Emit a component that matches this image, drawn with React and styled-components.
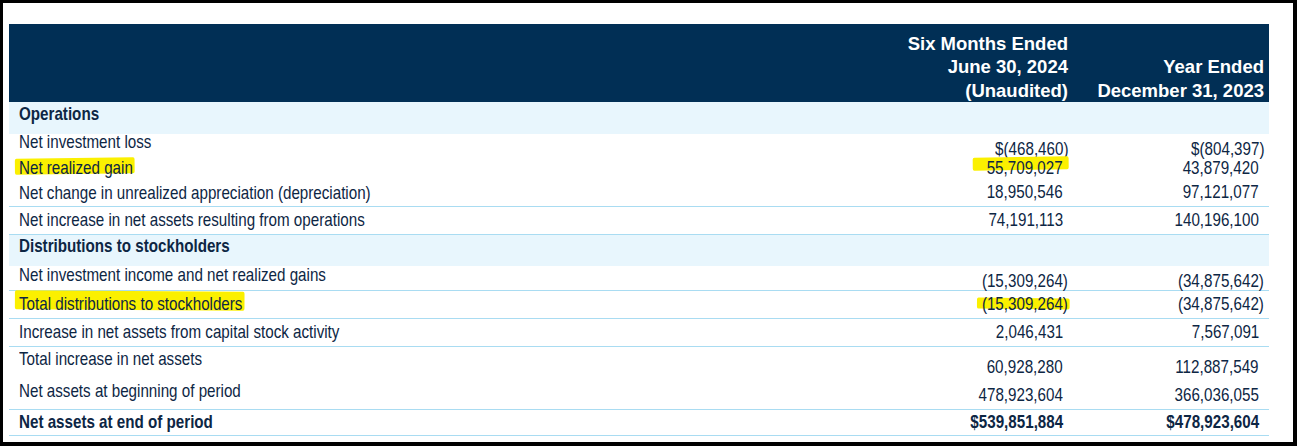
import React from 'react';
import styled, { createGlobalStyle } from 'styled-components';

const Global = createGlobalStyle`
  html, body { margin: 0; padding: 0; background: #000; }
  body { font-family: "Liberation Sans", Arial, sans-serif; }
`;

const Frame = styled.div`
  box-sizing: border-box;
  width: 1297px;
  height: 446px;
  padding: 3px 4px 4px 3px;
  background: #000;
`;

const Panel = styled.div`
  box-sizing: border-box;
  height: 100%;
  background: #fff;
  padding: 21px 0 0 6px;
`;

const Table = styled.div`
  width: 1260px;
  display: flex;
  flex-direction: column;
`;

const HeaderRow = styled.div`
  display: grid;
  grid-template-columns: 1fr 200px 196px;
  height: 78px;
  background: #012f55;
  color: #fff;
  font: bold 18.5px/23.5px "Liberation Sans", Arial, sans-serif;
`;

const HeadCell = styled.div`
  display: flex;
  flex-direction: column;
  justify-content: flex-end;
  align-items: flex-end;
  padding-right: 5px;
  white-space: nowrap;
`;

const Row = styled.div`
  display: grid;
  grid-template-columns: 1fr 200px 196px;
  box-sizing: border-box;
  height: ${(p) => p.$h}px;
  background: ${(p) => (p.$section ? '#e8f6fd' : 'transparent')};
  border-bottom: ${(p) => (p.$line ? '1px solid #a9dcf2' : '0')};
  font-family: "Liberation Sans", Arial, sans-serif;
  font-size: 18.5px;
  line-height: 16px;
  color: #0d2644;
  font-weight: ${(p) => (p.$bold ? 700 : 400)};
`;

const Label = styled.div`
  padding: ${(p) => p.$top}px 0 0 10px;
  white-space: nowrap;
`;

const Num = styled.div`
  text-align: right;
  padding: ${(p) => p.$top}px ${(p) => (p.$hang ? 10 : 5)}px 0 0;
  white-space: nowrap;
`;

/* Narrow (condensed) rendering of the body text, as in the source document */
const Narrow = styled.span`
  display: inline-block;
  transform: scaleX(0.82);
  transform-origin: ${(p) => (p.$right ? 'right' : 'left')} center;
`;

const Mark = styled.span`
  position: relative;
  z-index: 0;
  &::before {
    content: '';
    position: absolute;
    left: ${(p) => p.$l}px;
    right: ${(p) => p.$r}px;
    top: ${(p) => p.$t}px;
    bottom: ${(p) => p.$b}px;
    background: #fbf000;
    border-radius: 2px;
    transform: rotate(${(p) => p.$rot || 0}deg);
    z-index: -1;
  }
`;

const rows = [
  { label: 'Operations', section: true, h: 32, lt: 4, bold: true },
  { label: 'Net investment loss', a: '$(468,460)', b: '$(804,397)', h: 23, lt: 0, nt: 6.5 },
  {
    label: 'Net realized gain', a: '55,709,027', b: '43,879,420', h: 24, lt: 2.5, nt: 3,
    lm: { l: -4.9, r: -2.4, t: 1, b: 4.5, rot: -0.6 },
    am: { l: -17, r: -7.3, t: 0, b: 8.5, rot: -0.8 },
  },
  { label: 'Net change in unrealized appreciation (depreciation)', a: '18,950,546', b: '97,121,077', h: 26, lt: 4.2, nt: 2.9, line: true },
  { label: 'Net increase in net assets resulting from operations', a: '74,191,113', b: '140,196,100', h: 28, lt: 4.5, nt: 4.5, line: true },
  { label: 'Distributions to stockholders', section: true, h: 31, lt: 3.2, bold: true },
  { label: 'Net investment income and net realized gains', a: '(15,309,264)', b: '(34,875,642)', h: 25, lt: 1.2, nt: 7.2, line: true },
  {
    label: 'Total distributions to stockholders', a: '(15,309,264)', b: '(34,875,642)', h: 28, lt: 4.5, nt: 5.2, line: true,
    lm: { l: -4.9, r: -2.4, t: -1.5, b: 3.9, rot: 0.3 },
    am: { l: -6.1, r: -2.4, t: 4.8, b: 5.2, rot: 0.4 },
  },
  { label: 'Increase in net assets from capital stock activity', a: '2,046,431', b: '7,567,091', h: 28, lt: 4.9, nt: 4.9, line: true },
  { label: 'Total increase in net assets', a: '60,928,280', b: '112,887,549', h: 31, lt: 4.2, nt: 11.9 },
  { label: 'Net assets at beginning of period', a: '478,923,604', b: '366,036,055', h: 32, lt: 4.9, nt: 9.2, line: true },
  { label: 'Net assets at end of period', a: '$539,851,884', b: '$478,923,604', h: 26, lt: 3.9, nt: 3.9, line: true, bold: true },
];

const hangs = (v) => v && !v.endsWith(')');

const Marked = ({ m, children }) =>
  m ? (
    <Mark $l={m.l} $r={m.r} $t={m.t} $b={m.b} $rot={m.rot}>
      {children}
    </Mark>
  ) : (
    children
  );

export default function App() {
  return (
    <>
      <Global />
      <Frame>
        <Panel>
          <Table>
            <HeaderRow>
              <div />
              <HeadCell>
                <span>Six Months Ended</span>
                <span>June 30, 2024</span>
                <span>(Unaudited)</span>
              </HeadCell>
              <HeadCell>
                <span>Year Ended</span>
                <span>December 31, 2023</span>
              </HeadCell>
            </HeaderRow>
            {rows.map((r, i) => (
              <Row key={i} $h={r.h} $section={r.section} $line={r.line} $bold={r.bold}>
                <Label $top={r.lt}>
                  <Narrow>
                    <Marked m={r.lm}>{r.label}</Marked>
                  </Narrow>
                </Label>
                <Num $top={r.nt ?? 0} $hang={hangs(r.a)}>
                  {r.a && (
                    <Narrow $right>
                      <Marked m={r.am}>{r.a}</Marked>
                    </Narrow>
                  )}
                </Num>
                <Num $top={r.nt ?? 0} $hang={hangs(r.b)}>
                  {r.b && <Narrow $right>{r.b}</Narrow>}
                </Num>
              </Row>
            ))}
          </Table>
        </Panel>
      </Frame>
    </>
  );
}
